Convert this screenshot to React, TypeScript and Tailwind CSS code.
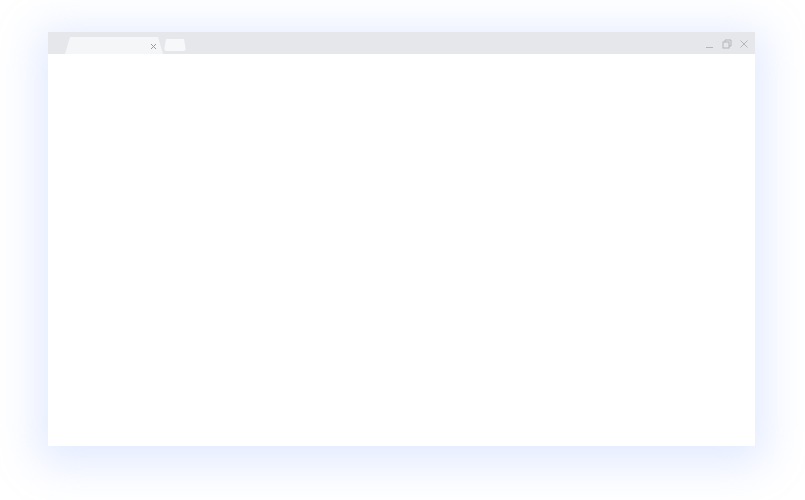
export default function App() {
  return (
    <div className="w-[805px] h-[500px] bg-white pt-[32px] pl-[48px] overflow-hidden">
      <div className="w-[707px] h-[414px] flex flex-col bg-white shadow-[0_8px_40px_10px_rgba(150,180,255,0.28)]">
        <div className="h-[22px] bg-[#e5e7ea] flex items-end pl-[17px] pr-[6px]">
          <div className="relative w-[98px] h-[17px] bg-[#f4f6f8] [clip-path:polygon(5px_0,93px_0,98px_100%,0_100%)] flex items-center justify-end pr-[6px]">
            <svg width="7" height="7" viewBox="0 0 7 7" className="mt-[1px]">
              <path d="M1 1L6 6M6 1L1 6" stroke="#9a9ea3" strokeWidth="1" />
            </svg>
          </div>
          <div className="ml-[1px] mb-[3px] w-[22px] h-[12px] bg-[#f7f8fa] rounded-[3px] [clip-path:polygon(2px_0,20px_0,22px_100%,0_100%)]" />
          <div className="flex-1" />
          <div className="flex items-center gap-[7px] self-center mt-[1px]">
            <svg width="10" height="10" viewBox="0 0 10 10">
              <path d="M1 8.5H8" stroke="#b3b6bb" strokeWidth="1" />
            </svg>
            <svg width="10" height="10" viewBox="0 0 10 10">
              <rect x="1" y="3" width="6" height="6" fill="none" stroke="#b3b6bb" strokeWidth="1" />
              <path d="M3 3V1H9V7H7" fill="none" stroke="#b3b6bb" strokeWidth="1" />
            </svg>
            <svg width="10" height="10" viewBox="0 0 10 10">
              <path d="M1.5 1.5L8.5 8.5M8.5 1.5L1.5 8.5" stroke="#b3b6bb" strokeWidth="1" />
            </svg>
          </div>
        </div>
        <div className="flex-1 bg-white" />
      </div>
    </div>
  );
}
